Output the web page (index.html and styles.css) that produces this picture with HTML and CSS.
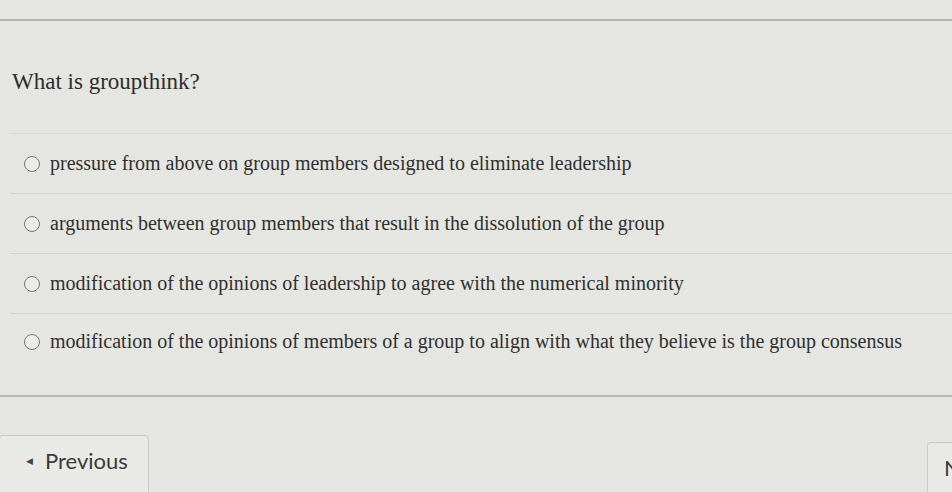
FILE: index.html
```html
<!DOCTYPE html>
<html lang="en">
<head>
    <meta charset="UTF-8">
    <meta name="viewport" content="width=device-width, initial-scale=1.0">
    <title>Quiz Question</title>
    <link rel="stylesheet" href="styles.css">
</head>
<body>
    <div class="top-rule"></div>

    <div class="question">What is groupthink?</div>

    <div class="answers">
        <label class="answer"><span class="radio"></span>pressure from above on group members designed to eliminate leadership</label>
        <label class="answer"><span class="radio"></span>arguments between group members that result in the dissolution of the group</label>
        <label class="answer"><span class="radio"></span>modification of the opinions of leadership to agree with the numerical minority</label>
        <label class="answer"><span class="radio"></span>modification of the opinions of members of a group to align with what they believe is the group consensus</label>
    </div>

    <div class="bottom-rule"></div>

    <div class="nav">
        <button class="nav-btn prev"><span class="arrow">&#9664;</span>Previous</button>
        <button class="nav-btn next">Next</button>
    </div>
</body>
</html>
```

FILE: styles.css
```css
body {
    margin: 0;
    background-color: #e5e5e1;
    overflow: hidden;
    height: 492px;
}
.top-rule {
    margin-top: 19px;
    border-top: 2px solid #b3b3b0;
}
.question {
    font-family: "Liberation Serif", "Times New Roman", serif;
    font-size: 23px;
    line-height: 26px;
    color: #2c2c2c;
    padding: 48px 0 38px 12px;
}
.answers {
    margin-left: 10px;
}
.answer {
    display: flex;
    align-items: center;
    height: 59px;
    border-top: 1px solid #d3d3cf;
    font-family: "Liberation Serif", "Times New Roman", serif;
    font-size: 20px;
    color: #303030;
    padding-left: 14px;
}
.answer:first-child {
    border-top-color: #d8d8d4;
}
.answer:last-child {
    height: 55px;
    padding-bottom: 4px;
}
.radio {
    width: 14px;
    height: 14px;
    border: 1.5px solid #777;
    border-radius: 50%;
    background-color: #ececea;
    margin-right: 10px;
    flex-shrink: 0;
}
.bottom-rule {
    margin-top: 22px;
    border-top: 2px solid #b7b7b4;
}
.nav {
    display: flex;
    justify-content: space-between;
    align-items: flex-start;
    margin-top: 38px;
}
.nav-btn {
    font-family: Lato, "Open Sans", sans-serif;
    font-size: 22px;
    color: #3a3a3a;
    background-color: #e9e9e6;
    border: 1px solid #c9c9c5;
    border-radius: 4px;
    height: 64px;
    display: flex;
    align-items: center;
    padding: 0 18px 14px 26px;
}
.prev {
    width: 150px;
    margin-left: -1px;
}
.arrow {
    font-size: 9px;
    margin-right: 12px;
    color: #444;
}
.next {
    margin-top: 7px;
    margin-right: -60px;
    width: 85px;
    padding-left: 16px;
}
```
